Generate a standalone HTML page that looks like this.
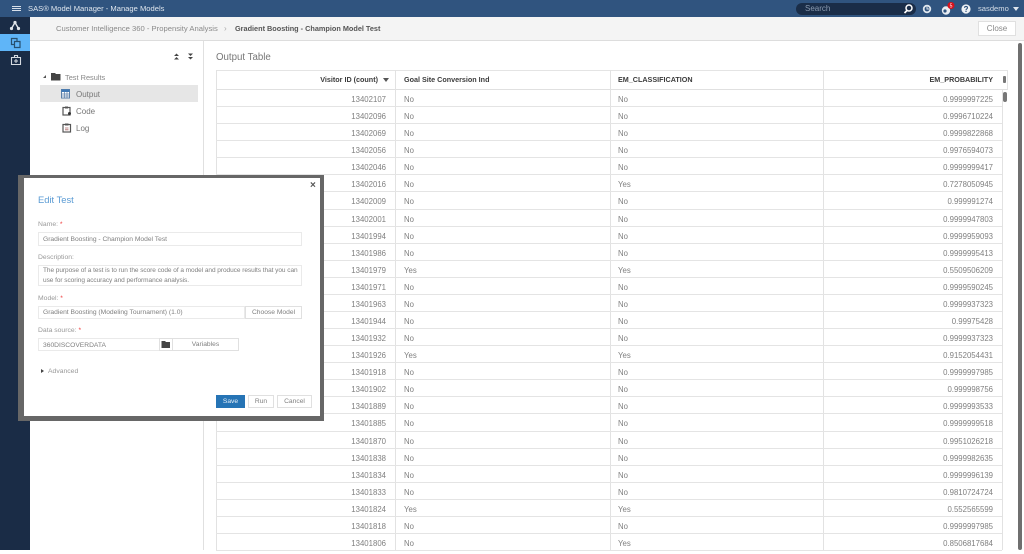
<!DOCTYPE html>
<html><head><meta charset="utf-8"><title>SAS Model Manager</title>
<style>
html,body{margin:0;padding:0;width:1024px;height:550px;overflow:hidden;background:#fff;font-family:"Liberation Sans",sans-serif;color:#777;font-size:8px}
.a{position:absolute}
.t{position:absolute;white-space:nowrap;line-height:10px}
#rows{position:absolute;left:216px;top:90px;width:786px}
.r{height:17.09px;box-sizing:border-box;border-bottom:1px solid #e4e4e4;position:relative;line-height:20px;color:#808080;font-size:7.8px}
.r span{position:absolute;top:0;white-space:nowrap}
.r .c1{right:616px}.r .c2{left:188px}.r .c3{left:402px}.r .c4{right:9px}
.v{position:absolute;top:70px;width:1px;height:480px;background:#e2e2e2}
.h{font-weight:bold;color:#3c3c3c;font-size:7.2px}
.in{position:absolute;box-sizing:border-box;border:1px solid #eaeaea;background:#fff;color:#808080;font-size:6.7px;padding-left:4px;line-height:13px;white-space:nowrap}
.btn{position:absolute;box-sizing:border-box;border:1px solid #e0e0e0;background:#fff;color:#808080;font-size:6.7px;text-align:center;white-space:nowrap}
.lb{position:absolute;left:38px;color:#999;font-size:6.8px;line-height:9px;white-space:nowrap}
.lb b{color:#e33;font-weight:normal}
</style></head><body>
<!-- top bar -->
<div class="a" style="left:0;top:0;width:1024px;height:17px;background:#30547f"></div>
<div class="a" style="left:12px;top:6px;width:9px;height:1px;background:#d8e0ea;box-shadow:0 2px 0 #d8e0ea,0 4px 0 #d8e0ea"></div>
<div class="t" style="left:28px;top:4px;color:#dfe6ee;font-size:7.6px">SAS® Model Manager - Manage Models</div>
<div class="a" style="left:796px;top:3px;width:120px;height:12px;border-radius:6px;background:#1a2d48"></div>
<div class="t" style="left:805px;top:4px;color:#8b9bb0;font-size:8px">Search</div>
<svg class="a" style="left:902px;top:3px" width="12" height="12" viewBox="0 0 12 12"><circle cx="7" cy="5" r="3" fill="none" stroke="#fff" stroke-width="1.5"/><path d="M5 7.500L2.500 10" stroke="#fff" stroke-width="1.700"/></svg>
<svg class="a" style="left:921px;top:3px" width="12" height="12" viewBox="0 0 12 12"><circle cx="6" cy="6" r="4.200" fill="#dfe6ee"/><circle cx="6" cy="6" r="2.400" fill="#30547f"/><path d="M6 3.800V6H8" stroke="#dfe6ee" fill="none"/></svg>
<svg class="a" style="left:940px;top:1px" width="16" height="15" viewBox="0 0 16 15"><circle cx="6" cy="9.500" r="4.200" fill="#e8edf3"/><circle cx="5" cy="10" r="1.600" fill="#30547f"/><circle cx="11" cy="4.500" r="3.500" fill="#d8111b"/><text x="11" y="6.500" font-size="5" fill="#fff" text-anchor="middle" font-family="Liberation Sans, sans-serif">5</text></svg>
<svg class="a" style="left:960px;top:3px" width="12" height="12" viewBox="0 0 12 12"><circle cx="6" cy="6" r="4.600" fill="#eef2f6"/><path d="M4.500 4.800C4.600 3 7.500 3 7.500 4.800C7.500 6 6 5.900 6 7.100" stroke="#30547f" fill="none" stroke-width="1.100"/><rect x="5.400" y="7.800" width="1.200" height="1.200" fill="#30547f"/></svg>
<div class="t" style="left:978px;top:4px;color:#d5dde7;font-size:7.6px">sasdemo</div>
<div class="a" style="left:1013px;top:7px;border:3px solid transparent;border-top:4px solid #dfe6ee;border-bottom:0"></div>
<!-- sidebar -->
<div class="a" style="left:0;top:17px;width:30px;height:533px;background:#1a2c46"></div>
<div class="a" style="left:0;top:34px;width:30px;height:17px;background:#5fb5f8"></div>
<svg class="a" style="left:9px;top:20px" width="12" height="11" viewBox="0 0 12 11"><path d="M6 2.500L2.500 8.500M6 2.500L9.500 8.500" stroke="#e0e5ea" stroke-width="1.400"/><circle cx="6" cy="2.500" r="1.600" fill="#e0e5ea"/><circle cx="2.500" cy="8.500" r="1.600" fill="#e0e5ea"/><circle cx="9.500" cy="8.500" r="1.600" fill="#e0e5ea"/></svg>
<svg class="a" style="left:10px;top:37px" width="12" height="12" viewBox="0 0 12 12"><path d="M1.500 1.500H7V7.500H1.500Z" fill="none" stroke="#27506f" stroke-width="1.200"/><path d="M4.500 4.500H10V10.500H4.500Z" fill="#5fb5f8" stroke="#27506f" stroke-width="1.200"/></svg>
<svg class="a" style="left:10px;top:54px" width="12" height="12" viewBox="0 0 12 12"><path d="M1.500 3.500H10.500V10.500H1.500Z M4.500 3.500V1.500H7.500V3.500" fill="none" stroke="#d6dbe1" stroke-width="1.100"/><path d="M6 5V9M4 7H8" stroke="#d6dbe1"/></svg>
<!-- breadcrumb -->
<div class="a" style="left:30px;top:17px;width:994px;height:24px;box-sizing:border-box;background:#f4f4f4;border-bottom:1px solid #ddd"></div>
<div class="t" style="left:56px;top:24px;color:#8a8a8a;font-size:7.65px">Customer Intelligence 360 - Propensity Analysis</div>
<div class="t" style="left:224px;top:24px;color:#aaa;font-size:8px">›</div>
<div class="t" style="left:235px;top:24px;color:#555;font-weight:bold;font-size:7.3px">Gradient Boosting - Champion Model Test</div>
<div class="btn" style="left:978px;top:21px;width:38px;height:15px;line-height:13px;font-size:8px;color:#888">Close</div>
<!-- left panel -->
<div class="a" style="left:203px;top:41px;width:1px;height:509px;background:#e0e0e0"></div>
<svg class="a" style="left:172px;top:52px" width="24" height="9" viewBox="0 0 24 9"><path d="M2 4L4.500 1.500L7 4ZM2 7.500L4.500 5L7 7.500Z" fill="#444"/><path d="M16 1.500H21L18.500 4ZM16 5H21L18.500 7.500Z" fill="#444"/></svg>
<div class="a" style="left:40px;top:85px;width:158px;height:17px;background:#e6e6e6"></div>
<div class="a" style="left:43px;top:75px;border-left:3px solid transparent;border-bottom:3px solid #555"></div>
<svg class="a" style="left:51px;top:72px" width="10" height="9" viewBox="0 0 10 9"><path d="M0 1H4L5 2H9.500V8.500H0Z" fill="#444"/></svg>
<div class="t" style="left:65px;top:73px;font-size:7.4px;color:#888">Test Results</div>
<svg class="a" style="left:61px;top:89px" width="10" height="10" viewBox="0 0 10 10"><rect x=".5" y=".5" width="8" height="8.500" fill="#fff" stroke="#5b7fa8"/><rect x=".5" y=".5" width="8" height="2.500" fill="#3f78b5"/><path d="M1 5H8M1 7H8M3.500 3V9M6 3V9" stroke="#5b7fa8" stroke-width=".7"/></svg>
<div class="t" style="left:76px;top:90px;font-size:8px;color:#777">Output</div>
<svg class="a" style="left:62px;top:106px" width="10" height="10" viewBox="0 0 10 10"><rect x="1" y="1.500" width="7" height="7.500" fill="#fff" stroke="#555" stroke-width="1.200"/><rect x="3" y=".5" width="3" height="2" fill="#555"/><circle cx="7.500" cy="7.500" r="1.500" fill="#333"/></svg>
<div class="t" style="left:76px;top:107px;font-size:8px;color:#777">Code</div>
<svg class="a" style="left:62px;top:123px" width="10" height="10" viewBox="0 0 10 10"><rect x="1" y="1.500" width="7.500" height="7.500" fill="#fff" stroke="#555" stroke-width="1.200"/><rect x="3" y=".5" width="3.500" height="2" fill="#555"/><path d="M3 5H6.500M3 6.800H6.500" stroke="#a66" stroke-width=".8"/></svg>
<div class="t" style="left:76px;top:124px;font-size:8px;color:#777">Log</div>
<!-- output table -->
<div class="t" style="left:216px;top:53px;font-size:9.7px;color:#777">Output Table</div>
<div class="a" style="left:216px;top:70px;width:792px;height:20px;box-sizing:border-box;border:1px solid #e4e4e4;border-bottom:1px solid #e0e0e0"></div>
<div class="a" style="left:216px;top:70px;width:1px;height:480px;background:#e2e2e2"></div>
<div class="v" style="left:395px"></div><div class="v" style="left:610px"></div><div class="v" style="left:823px"></div><div class="v" style="left:1002px;top:90px;height:460px"></div>
<div class="t h" style="right:646px;top:75px">Visitor ID (count)</div>
<div class="a" style="left:383px;top:78px;border:3px solid transparent;border-top:4px solid #555;border-bottom:0"></div>
<div class="t h" style="left:404px;top:75px">Goal Site Conversion Ind</div>
<div class="t h" style="left:618px;top:75px">EM_CLASSIFICATION</div>
<div class="t h" style="right:31px;top:75px">EM_PROBABILITY</div>
<div class="a" style="left:1003px;top:76px;width:3px;height:7px;background:#777;border-radius:1px"></div>
<div class="a" style="left:1003px;top:92px;width:4px;height:10px;background:#777;border-radius:2px"></div>
<div class="a" style="left:1018px;top:43px;width:4px;height:507px;background:#6f6f6f;border-radius:2px"></div>
<div id="rows">
<div class="r"><span class="c1">13402107</span><span class="c2">No</span><span class="c3">No</span><span class="c4">0.9999997225</span></div>
<div class="r"><span class="c1">13402096</span><span class="c2">No</span><span class="c3">No</span><span class="c4">0.9996710224</span></div>
<div class="r"><span class="c1">13402069</span><span class="c2">No</span><span class="c3">No</span><span class="c4">0.9999822868</span></div>
<div class="r"><span class="c1">13402056</span><span class="c2">No</span><span class="c3">No</span><span class="c4">0.9976594073</span></div>
<div class="r"><span class="c1">13402046</span><span class="c2">No</span><span class="c3">No</span><span class="c4">0.9999999417</span></div>
<div class="r"><span class="c1">13402016</span><span class="c2">No</span><span class="c3">Yes</span><span class="c4">0.7278050945</span></div>
<div class="r"><span class="c1">13402009</span><span class="c2">No</span><span class="c3">No</span><span class="c4">0.999991274</span></div>
<div class="r"><span class="c1">13402001</span><span class="c2">No</span><span class="c3">No</span><span class="c4">0.9999947803</span></div>
<div class="r"><span class="c1">13401994</span><span class="c2">No</span><span class="c3">No</span><span class="c4">0.9999959093</span></div>
<div class="r"><span class="c1">13401986</span><span class="c2">No</span><span class="c3">No</span><span class="c4">0.9999995413</span></div>
<div class="r"><span class="c1">13401979</span><span class="c2">Yes</span><span class="c3">Yes</span><span class="c4">0.5509506209</span></div>
<div class="r"><span class="c1">13401971</span><span class="c2">No</span><span class="c3">No</span><span class="c4">0.9999590245</span></div>
<div class="r"><span class="c1">13401963</span><span class="c2">No</span><span class="c3">No</span><span class="c4">0.9999937323</span></div>
<div class="r"><span class="c1">13401944</span><span class="c2">No</span><span class="c3">No</span><span class="c4">0.99975428</span></div>
<div class="r"><span class="c1">13401932</span><span class="c2">No</span><span class="c3">No</span><span class="c4">0.9999937323</span></div>
<div class="r"><span class="c1">13401926</span><span class="c2">Yes</span><span class="c3">Yes</span><span class="c4">0.9152054431</span></div>
<div class="r"><span class="c1">13401918</span><span class="c2">No</span><span class="c3">No</span><span class="c4">0.9999997985</span></div>
<div class="r"><span class="c1">13401902</span><span class="c2">No</span><span class="c3">No</span><span class="c4">0.999998756</span></div>
<div class="r"><span class="c1">13401889</span><span class="c2">No</span><span class="c3">No</span><span class="c4">0.9999993533</span></div>
<div class="r"><span class="c1">13401885</span><span class="c2">No</span><span class="c3">No</span><span class="c4">0.9999999518</span></div>
<div class="r"><span class="c1">13401870</span><span class="c2">No</span><span class="c3">No</span><span class="c4">0.9951026218</span></div>
<div class="r"><span class="c1">13401838</span><span class="c2">No</span><span class="c3">No</span><span class="c4">0.9999982635</span></div>
<div class="r"><span class="c1">13401834</span><span class="c2">No</span><span class="c3">No</span><span class="c4">0.9999996139</span></div>
<div class="r"><span class="c1">13401833</span><span class="c2">No</span><span class="c3">No</span><span class="c4">0.9810724724</span></div>
<div class="r"><span class="c1">13401824</span><span class="c2">Yes</span><span class="c3">Yes</span><span class="c4">0.552565599</span></div>
<div class="r"><span class="c1">13401818</span><span class="c2">No</span><span class="c3">No</span><span class="c4">0.9999997985</span></div>
<div class="r"><span class="c1">13401806</span><span class="c2">No</span><span class="c3">Yes</span><span class="c4">0.8506817684</span></div>
</div>
<!-- dialog -->
<div class="a" style="left:18px;top:175px;width:306px;height:246px;background:#676767"></div>
<div class="a" style="left:24px;top:178px;width:296px;height:238px;background:#fff"></div>
<div class="t" style="left:310px;top:181px;font-size:10px;color:#555;font-weight:bold">×</div>
<div class="t" style="left:38px;top:195px;font-size:9.4px;color:#5a9bd4">Edit Test</div>
<div class="lb" style="top:220px">Name: <b>*</b></div>
<div class="in" style="left:38px;top:232px;width:264px;height:14px">Gradient Boosting - Champion Model Test</div>
<div class="lb" style="top:253px">Description:</div>
<div class="in" style="left:38px;top:265px;width:264px;height:21px;line-height:9.500px;padding-top:0;font-size:6.5px;letter-spacing:-.05px">The purpose of a test is to run the score code of a model and produce results that you can<br>use for scoring accuracy and performance analysis.</div>
<div class="lb" style="top:294px">Model: <b>*</b></div>
<div class="in" style="left:38px;top:306px;width:207px;height:13px;line-height:11px">Gradient Boosting (Modeling Tournament) (1.0)</div>
<div class="btn" style="left:245px;top:306px;width:57px;height:13px;line-height:11px">Choose Model</div>
<div class="lb" style="top:326px">Data source: <b>*</b></div>
<div class="in" style="left:38px;top:338px;width:122px;height:13px">360DISCOVERDATA</div>
<div class="btn" style="left:159px;top:338px;width:14px;height:13px"></div>
<svg class="a" style="left:161px;top:340px" width="10" height="9" viewBox="0 0 10 9"><path d="M.5 1H4L5 2H9V8H.5Z" fill="#444"/></svg>
<div class="btn" style="left:172px;top:338px;width:67px;height:13px;line-height:12px">Variables</div>
<div class="a" style="left:41px;top:369px;border:2.500px solid transparent;border-left:3.500px solid #444;border-right:0"></div>
<div class="t" style="left:48px;top:367px;font-size:6.8px;color:#999">Advanced</div>
<div class="btn" style="left:216px;top:395px;width:29px;height:13px;line-height:13px;background:#2674b5;border:0;color:#e8f0f8">Save</div>
<div class="btn" style="left:248px;top:395px;width:26px;height:13px;line-height:12px">Run</div>
<div class="btn" style="left:277px;top:395px;width:35px;height:13px;line-height:12px">Cancel</div>
</body></html>
